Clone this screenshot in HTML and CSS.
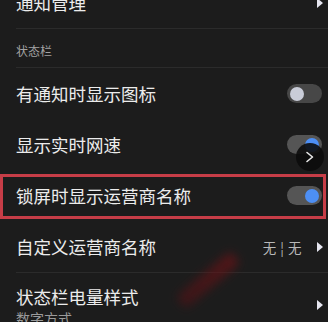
FILE: index.html
```html
<!DOCTYPE html>
<html lang="zh">
<head>
<meta charset="utf-8">
<link rel="stylesheet" href="styles.css">
</head>
<body>
<div class="screen">
  <div class="row first">
    <span class="title">通知管理</span>
    <span class="arrow"></span>
  </div>
  <div class="divider"></div>
  <div class="section">状态栏</div>
  <div class="divider"></div>
  <div class="row">
    <span class="title">有通知时显示图标</span>
    <span class="switch"></span>
  </div>
  <div class="row">
    <span class="title">显示实时网速</span>
    <span class="switch on"></span>
    <span class="float-btn">
      <svg width="10" height="12" viewBox="0 0 10 12"><path d="M2 1.5 L7.5 6 L2 10.5" fill="none" stroke="#e8e8e8" stroke-width="1.6" stroke-linecap="round" stroke-linejoin="round"/></svg>
    </span>
  </div>
  <div class="row marked">
    <span class="title">锁屏时显示运营商名称</span>
    <span class="switch on"></span>
  </div>
  <div class="row">
    <span class="title">自定义运营商名称</span>
    <span class="value">无 ¦ 无</span>
    <span class="arrow"></span>
  </div>
  <div class="divider"></div>
  <div class="row tall">
    <div class="texts">
      <span class="title">状态栏电量样式</span>
      <span class="sub">数字方式</span>
    </div>
    <span class="arrow"></span>
  </div>
  <div class="smudge"></div>
</div>
</body>
</html>
```

FILE: styles.css
```css
html, body {
  margin: 0;
  padding: 0;
  background: #1c1c1c;
  overflow: hidden;
}
body {
  width: 328px;
  height: 322px;
  font-family: "Noto Sans CJK SC", "Noto Sans", sans-serif;
  color: #e6e6e6;
}
.screen {
  position: relative;
  display: flex;
  flex-direction: column;
}
.row {
  position: relative;
  height: 51px;
  box-sizing: border-box;
  display: flex;
  align-items: center;
  padding: 0 5px 0 16px;
  flex-shrink: 0;
}
.row.first {
  margin-top: -23px;
}
.title {
  font-size: 17.5px;
  line-height: 22px;
  color: #ececec;
  flex: 1;
  white-space: nowrap;
}
.divider {
  height: 1px;
  margin-left: 16px;
  background: #2b2b2b;
  flex-shrink: 0;
}
.section {
  height: 38px;
  box-sizing: border-box;
  padding: 14px 0 0 16px;
  font-size: 12px;
  line-height: 16px;
  color: #a3a3a3;
  flex-shrink: 0;
}
.arrow {
  width: 0;
  height: 0;
  border-left: 6px solid #e6e6f0;
  border-top: 5px solid transparent;
  border-bottom: 5px solid transparent;
}
.value {
  font-size: 13.5px;
  color: #b8b8b8;
  margin-right: 15px;
  letter-spacing: 0.5px;
}
.switch {
  position: relative;
  width: 35px;
  height: 19px;
  border-radius: 10px;
  background: #474747;
  margin-right: 1px;
}
.switch::after {
  content: "";
  position: absolute;
  top: 2.5px;
  left: 3px;
  width: 14px;
  height: 14px;
  border-radius: 50%;
  background: #c9ccd8;
}
.switch.on {
  background: #555555;
}
.switch.on::after {
  left: 18px;
  background: #4d8ff5;
}
.float-btn {
  position: absolute;
  top: 24px;
  right: 4px;
  width: 28px;
  height: 28px;
  border-radius: 50%;
  background: rgba(12, 12, 12, 0.9);
  display: flex;
  align-items: center;
  justify-content: center;
}
.marked::after {
  content: "";
  position: absolute;
  top: 4px;
  bottom: 2px;
  left: 0;
  right: 2px;
  border: 3px solid #c63d47;
  pointer-events: none;
}
.row.tall {
  height: 64px;
  align-items: center;
}
.texts {
  flex: 1;
  display: flex;
  flex-direction: column;
  gap: 1px;
  padding-top: 3px;
}
.sub {
  font-size: 14px;
  line-height: 18px;
  color: #9a9a9a;
}
.smudge {
  position: absolute;
  left: 172px;
  top: 272px;
  width: 72px;
  height: 16px;
  background: linear-gradient(90deg, rgba(95, 15, 20, 0.45), rgba(115, 18, 22, 0.6));
  transform: rotate(-40deg);
  filter: blur(5px);
  border-radius: 6px;
}
```
